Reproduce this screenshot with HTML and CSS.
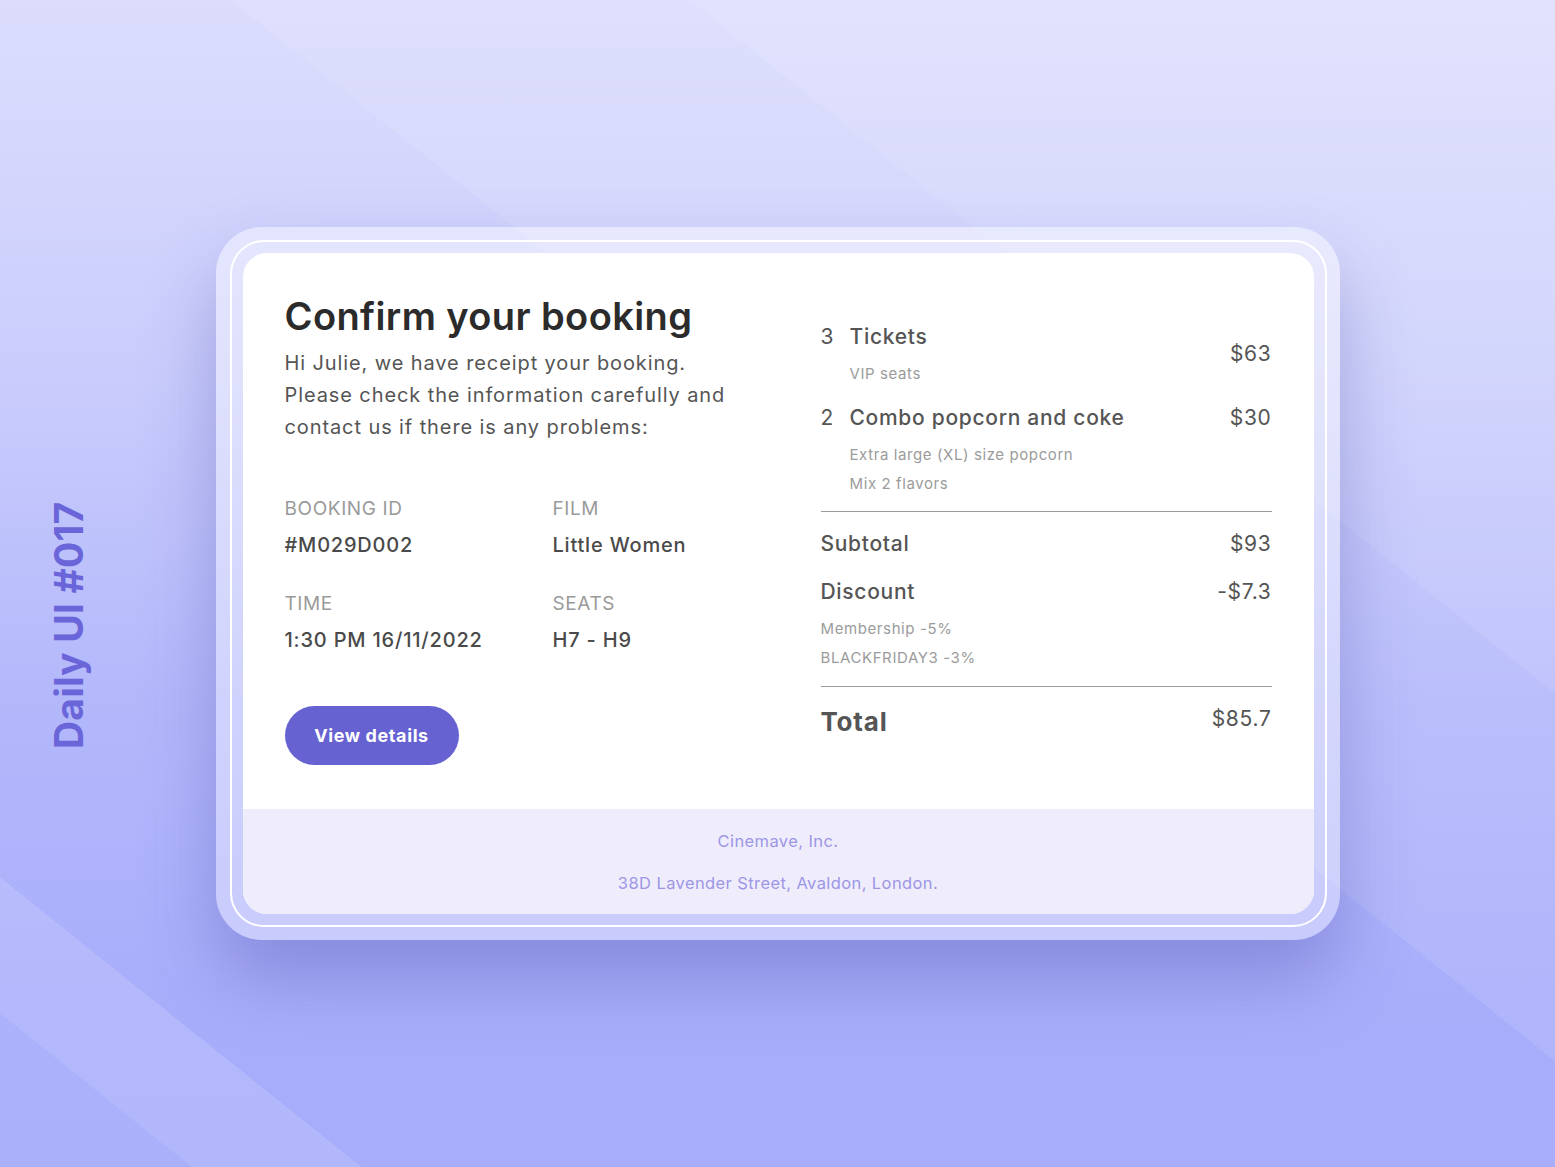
FILE: index.html
```html
<!DOCTYPE html>
<html lang="en">
<head>
<meta charset="utf-8">
<title>Confirm your booking</title>
<link rel="stylesheet" href="styles.css">
</head>
<body>
<div class="stage">
  <div class="side-label">Daily UI #017</div>
  <div class="frame">
    <div class="ring">
      <div class="card">
        <div class="card-body">
          <section class="left">
            <h1 class="title">Confirm your booking</h1>
            <p class="intro">Hi Julie, we have receipt your booking.<br>Please check the information carefully and<br>contact us if there is any problems:</p>
            <div class="details">
              <div class="field">
                <div class="label">BOOKING ID</div>
                <div class="value">#M029D002</div>
              </div>
              <div class="field">
                <div class="label">FILM</div>
                <div class="value">Little Women</div>
              </div>
              <div class="field">
                <div class="label">TIME</div>
                <div class="value">1:30 PM 16/11/2022</div>
              </div>
              <div class="field">
                <div class="label">SEATS</div>
                <div class="value">H7 - H9</div>
              </div>
            </div>
            <button class="btn">View details</button>
          </section>
          <section class="right">
            <div class="item item-center">
              <div class="qty">3</div>
              <div class="item-info">
                <div class="item-name">Tickets</div>
                <div class="item-desc">VIP seats</div>
              </div>
              <div class="price">$63</div>
            </div>
            <div class="item item-last">
              <div class="qty">2</div>
              <div class="item-info">
                <div class="item-name">Combo popcorn and coke</div>
                <div class="item-desc">Extra large (XL) size popcorn</div>
                <div class="item-desc">Mix 2 flavors</div>
              </div>
              <div class="price">$30</div>
            </div>
            <div class="rule"></div>
            <div class="sum-row">
              <div class="sum-name">Subtotal</div>
              <div class="price">$93</div>
            </div>
            <div class="sum-row discount">
              <div class="sum-name">Discount</div>
              <div class="price">-$7.3</div>
            </div>
            <div class="sum-notes">
              <div class="note">Membership -5%</div>
              <div class="note">BLACKFRIDAY3 -3%</div>
            </div>
            <div class="rule"></div>
            <div class="sum-row total">
              <div class="total-name">Total</div>
              <div class="price">$85.7</div>
            </div>
          </section>
        </div>
        <footer class="card-foot">
          <div class="foot-line">Cinemave, Inc.</div>
          <div class="foot-line">38D Lavender Street, Avaldon, London.</div>
        </footer>
      </div>
    </div>
  </div>
</div>
</body>
</html>
```

FILE: styles.css
```css
* { box-sizing: border-box; }

html, body {
  margin: 0;
  padding: 0;
}

body {
  width: 1555px;
  height: 1167px;
  overflow: hidden;
  font-family: "Inter", "Open Sans", sans-serif;
}

.stage {
  position: relative;
  width: 1555px;
  height: 1167px;
  display: flex;
  align-items: center;
  justify-content: center;
  background:
    linear-gradient(38.7deg,
      rgba(255,255,255,0) 0px,
      rgba(255,255,255,0.05) 0px,
      rgba(255,255,255,0.05) 120px,
      rgba(255,255,255,0.13) 120px,
      rgba(255,255,255,0.13) 226px,
      rgba(255,255,255,0) 226px,
      rgba(255,255,255,0) 1055px,
      rgba(255,255,255,0.09) 1055px,
      rgba(255,255,255,0.09) 1342px,
      rgba(255,255,255,0.16) 1342px),
    linear-gradient(180deg, #dcddfd 0%, #cbcefc 30%, #b3b8fb 60%, #a9aefb 85%, #a7acfb 100%);
}

.side-label {
  position: absolute;
  left: 48px;
  top: 500px;
  width: 40px;
  height: 250px;
  display: flex;
  align-items: center;
  justify-content: center;
  writing-mode: vertical-rl;
  transform: rotate(180deg);
  font-size: 39px;
  font-weight: 700;
  color: #6a65d8;
  letter-spacing: 0.2px;
  white-space: nowrap;
}

.frame {
  width: 1124px;
  padding: 13px 13px 13px 14px;
  border-radius: 46px;
  background: linear-gradient(180deg, rgba(255,255,255,0.42), rgba(255,255,255,0.35));
  box-shadow: 0 40px 70px rgba(70, 70, 165, 0.34);
}

.ring {
  border: 2px solid #ffffff;
  border-radius: 34px;
  padding: 11px;
}

.card {
  background: #ffffff;
  border-radius: 24px;
  overflow: hidden;
}

.card-body {
  height: 556px;
  padding: 0 42px;
  display: grid;
  grid-template-columns: 476px 451px;
  column-gap: 60px;
}

.left {
  padding-top: 39px;
}

.title {
  margin: 0;
  font-size: 38px;
  line-height: 48px;
  font-weight: 600;
  color: #2b2b2b;
  letter-spacing: 0.4px;
}

.intro {
  margin: 7px 0 0;
  font-size: 20px;
  line-height: 32px;
  color: #555555;
  letter-spacing: 0.9px;
}

.details {
  margin-top: 54px;
  display: grid;
  grid-template-columns: 268px 1fr;
  row-gap: 35px;
}

.label {
  font-size: 19px;
  line-height: 24px;
  color: #9a9a9a;
  letter-spacing: 0.6px;
}

.value {
  margin-top: 12px;
  font-size: 20px;
  line-height: 24px;
  font-weight: 500;
  color: #4a4a4a;
  letter-spacing: 0.8px;
}

.btn {
  margin-top: 54px;
  width: 174px;
  height: 59px;
  border: none;
  border-radius: 30px;
  background: #6762d2;
  color: #ffffff;
  font-family: inherit;
  font-size: 18px;
  font-weight: 700;
  letter-spacing: 0.6px;
  cursor: pointer;
}

.right {
  padding-top: 70px;
  color: #555555;
}

.item {
  display: grid;
  grid-template-columns: 29px 1fr auto;
  margin-bottom: 16px;
}

.item-last {
  margin-bottom: 0;
}

.item-center .price {
  align-self: center;
  padding-bottom: 4px;
}

.qty, .item-name, .sum-name, .price {
  font-size: 21px;
  line-height: 28px;
  color: #555555;
  letter-spacing: 0.7px;
}

.item-name, .sum-name {
  font-weight: 500;
}

.item-desc, .note {
  font-size: 15px;
  line-height: 29px;
  color: #9b9b9b;
  letter-spacing: 0.6px;
}

.item-name + .item-desc {
  margin-top: 8px;
}

.rule {
  height: 1px;
  background: #9c9c9c;
}

.item + .rule {
  margin-top: 13px;
}

.sum-row {
  display: flex;
  justify-content: space-between;
  margin-top: 18px;
}

.discount {
  margin-top: 20px;
}

.sum-notes {
  margin-top: 8px;
  margin-bottom: 14px;
}

.total {
  margin-top: 18px;
  align-items: flex-start;
}

.total-name {
  font-size: 26px;
  line-height: 34px;
  font-weight: 700;
  color: #555555;
  letter-spacing: 0.8px;
}

.card-foot {
  height: 105px;
  background: #efedfb;
  display: flex;
  flex-direction: column;
  align-items: center;
  justify-content: center;
  gap: 18px;
}

.foot-line {
  font-family: "Inter", "Roboto", sans-serif;
  font-size: 16.5px;
  line-height: 24px;
  color: #9d96e6;
  letter-spacing: 0.4px;
}
```
